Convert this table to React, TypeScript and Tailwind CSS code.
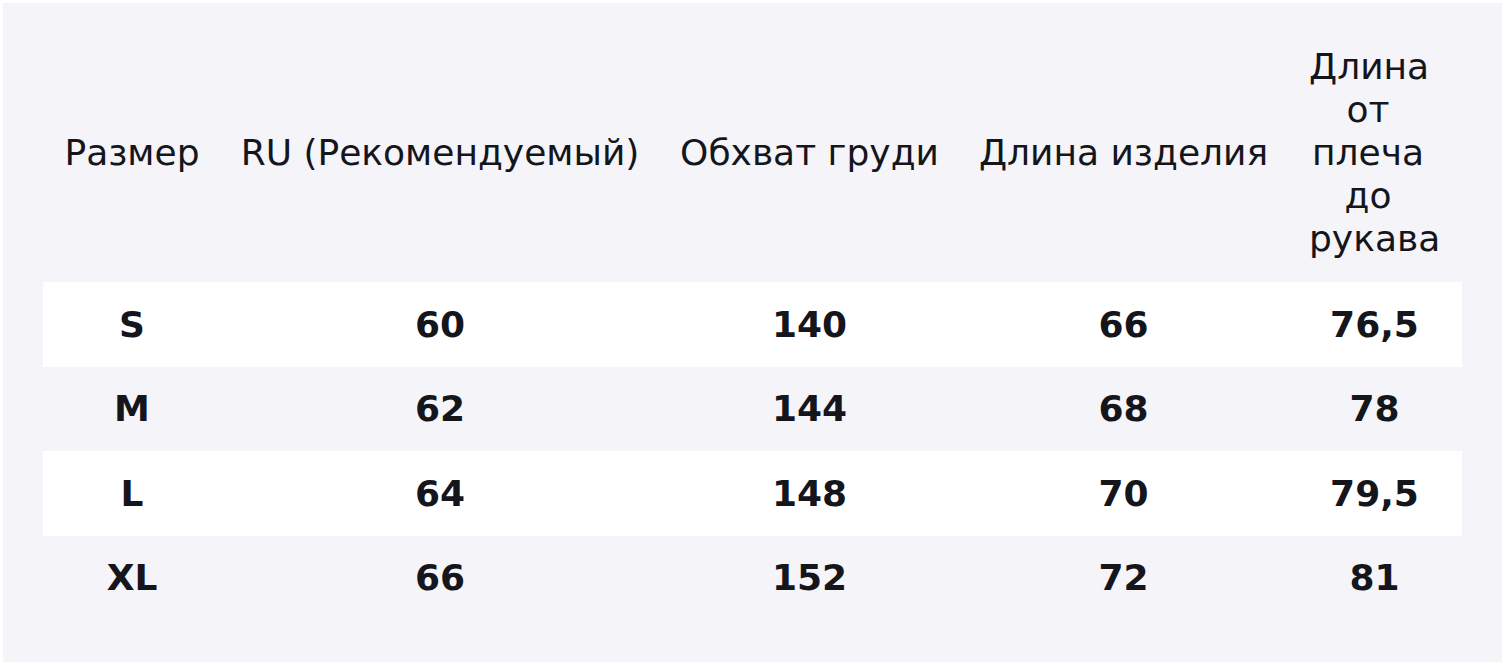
const headers = ["Размер", "RU (Рекомендуемый)", "Обхват груди", "Длина изделия", "Длина от плеча до рукава"];

const rows = [
  ["S", "60", "140", "66", "76,5"],
  ["M", "62", "144", "68", "78"],
  ["L", "64", "148", "70", "79,5"],
  ["XL", "66", "152", "72", "81"],
];

const widths = ["w-[178px]", "w-[438px]", "w-[301px]", "w-[327px]", "w-[175px]"];

export default function App() {
  return (
    <div className="w-[1505px] h-[665px] bg-white p-[3px] font-['DejaVu_Sans',sans-serif]">
      <div className="h-full bg-[#f4f4f9] pl-[40px] pr-[39px] pt-[20px] pb-[40px] text-[#15151c]">
        <table className="table-fixed w-[1419px] border-collapse text-[36px] leading-[43px]">
          <colgroup>
            {widths.map((w) => (
              <col key={w} className={w} />
            ))}
          </colgroup>
          <thead>
            <tr>
              {headers.map((h, i) => (
                <th
                  key={h}
                  className={
                    i === 4
                      ? "pl-[22px] pr-[35px] py-[22px] font-normal text-center align-middle"
                      : "px-[10px] py-[22px] font-normal text-center align-middle whitespace-nowrap"
                  }
                >
                  {h}
                </th>
              ))}
            </tr>
          </thead>
          <tbody>
            {rows.map((r, i) => (
              <tr key={r[0]} className={i % 2 === 0 ? "bg-white" : "bg-[#f4f4f9]"}>
                {r.map((c, j) => (
                  <td key={j} className="px-[22px] py-[20.75px] font-bold text-center">
                    {c}
                  </td>
                ))}
              </tr>
            ))}
          </tbody>
        </table>
      </div>
    </div>
  );
}
